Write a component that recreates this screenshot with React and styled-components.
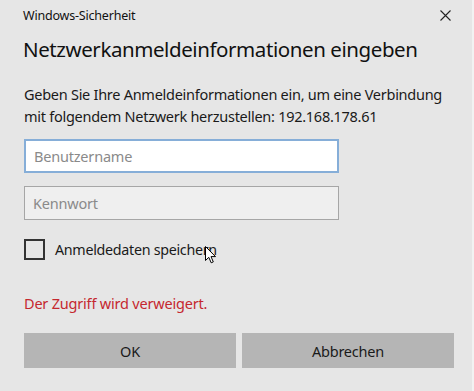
import React from 'react';
import styled, { createGlobalStyle } from 'styled-components';

const GlobalStyle = createGlobalStyle`
  html, body {
    margin: 0;
    padding: 0;
    background: #e6e6e6;
  }
  * {
    box-sizing: border-box;
  }
`;

const Dialog = styled.div`
  position: relative;
  width: 474px;
  height: 391px;
  background: #e6e6e6;
  border-right: 2px solid #f2f2f2;
  font-family: "Noto Sans", "Open Sans", sans-serif;
  color: #1a1a1a;
  display: flex;
  flex-direction: column;
  padding: 0 18px 0 23px;
`;

const TitleBar = styled.div`
  height: 30px;
  display: flex;
  align-items: center;
  justify-content: space-between;
  padding-top: 1px;
`;

const TitleText = styled.span`
  font-size: 12.5px;
  color: #111;
  letter-spacing: -0.2px;
`;

const CloseIcon = styled.svg`
  width: 11px;
  height: 11px;
  margin-right: 3px;
`;

const Heading = styled.h1`
  margin: 5px 0 0;
  font-size: 20.5px;
  font-weight: 400;
  line-height: 28px;
  letter-spacing: -0.42px;
  color: #111;
`;

const Message = styled.p`
  margin: 20px 0 0 1px;
  font-size: 14.5px;
  line-height: 22px;
  letter-spacing: -0.27px;
  color: #1a1a1a;
`;

const Field = styled.input`
  display: block;
  width: 315px;
  height: 34px;
  margin: ${p => p.$first ? '12px' : '13px'} 0 0 1px;
  padding: 0 8px;
  font-family: inherit;
  font-size: 14.5px;
  letter-spacing: -0.2px;
  background: ${p => p.$active ? '#ffffff' : '#efefef'};
  border: ${p => p.$active ? '2px solid #86aed8' : '1px solid #a6a6a6'};
  outline: none;
  &::placeholder {
    color: #8a8a8a;
  }
`;

const CheckRow = styled.label`
  display: flex;
  align-items: center;
  gap: 10px;
  margin: 19px 0 0 1px;
  font-size: 14.3px;
  letter-spacing: -0.3px;
  color: #1a1a1a;
`;

const Box = styled.span`
  width: 21px;
  height: 21px;
  border: 2px solid #333;
  background: transparent;
`;

const ErrorText = styled.div`
  margin: 33px 0 0 1px;
  font-size: 14.5px;
  letter-spacing: -0.2px;
  color: #c5282f;
`;

const Buttons = styled.div`
  display: flex;
  gap: 6px;
  margin: 20px 0 0 1px;
`;

const Button = styled.button`
  flex: 1;
  height: 35px;
  border: none;
  background: #b5b5b5;
  font-family: inherit;
  font-size: 14.5px;
  letter-spacing: -0.2px;
  color: #1a1a1a;
`;

const Pointer = styled.svg`
  position: absolute;
  left: 205px;
  top: 246px;
  width: 12px;
  height: 18px;
`;

export default function App() {
  return (
    <>
      <GlobalStyle />
      <Dialog>
        <TitleBar>
          <TitleText>Windows-Sicherheit</TitleText>
          <CloseIcon viewBox="0 0 11 11">
            <path d="M0.5 0.5 L10.5 10.5 M10.5 0.5 L0.5 10.5" stroke="#222" strokeWidth="1.1" fill="none" />
          </CloseIcon>
        </TitleBar>
        <Heading>Netzwerkanmeldeinformationen eingeben</Heading>
        <Message>
          Geben Sie Ihre Anmeldeinformationen ein, um eine Verbindung<br />
          mit folgendem Netzwerk herzustellen: 192.168.178.61
        </Message>
        <Field $first $active placeholder="Benutzername" />
        <Field type="password" placeholder="Kennwort" />
        <CheckRow>
          <Box />
          Anmeldedaten speichern
        </CheckRow>
        <ErrorText>Der Zugriff wird verweigert.</ErrorText>
        <Buttons>
          <Button>OK</Button>
          <Button>Abbrechen</Button>
        </Buttons>
        <Pointer viewBox="0 0 12 18">
          <path d="M0.5 0.5 L0.5 14.5 L3.8 11.3 L6.2 16.8 L8.3 15.9 L6 10.6 L10.5 10.6 Z" fill="#fff" stroke="#000" strokeWidth="1" strokeLinejoin="round" />
        </Pointer>
      </Dialog>
    </>
  );
}
